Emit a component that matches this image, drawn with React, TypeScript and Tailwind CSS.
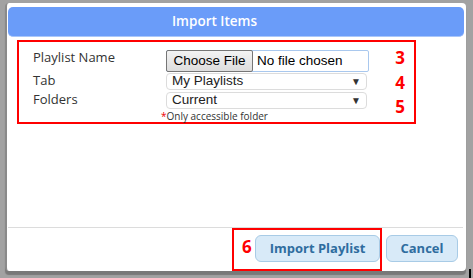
export default function App() {
  return (
    <div className="relative w-[473px] h-[278px] overflow-hidden bg-[#a2a2a2] pt-[3px] pl-[5px]">
      {/* Dialog */}
      <div className="flex flex-col w-[461px] h-[268px] bg-white rounded-[4px] border-l-2 border-[#8a8a8a] shadow-[0_4px_1px_rgba(0,0,0,0.25)]">
        {/* Title bar */}
        <div className="mt-[4px] ml-[1px] w-[456px] h-[30px] shrink-0 flex items-center justify-center pr-[43px] rounded-[5px] bg-[#6a9cf9] border-b border-[#a9c6fa] text-white text-[13.5px] font-semibold [font-family:'Open_Sans',sans-serif]">
          Import Items
        </div>

        {/* Form (annotated) */}
        <div className="mt-[3px] ml-[10px] w-[399px] h-[84px] shrink-0 flex border-2 border-[#ff0000]">
          <div className="flex flex-col pl-[14px] pt-[8px] text-[#333] [font-family:'Open_Sans',sans-serif]">
            <FormRow label="Playlist Name" height="h-[22px]">
              <div className="flex items-center w-[203px] h-[22px] border border-[#a9c8ee] rounded-[2px] [font-family:'Liberation_Sans',Arial,sans-serif] text-[13.5px] text-black">
                <span className="flex items-center justify-center w-[87px] h-[22px] -ml-px border border-[#767676] rounded-[2px] bg-gradient-to-b from-[#f3f3f3] to-[#dddddd]">
                  Choose File
                </span>
                <span className="ml-[4px]">No file chosen</span>
              </div>
            </FormRow>
            <FormRow label="Tab" height="h-[17px]" className="mt-[1px]">
              <Select value="My Playlists" />
            </FormRow>
            <FormRow label="Folders" height="h-[17px]" className="mt-[2px]">
              <Select value="Current" />
            </FormRow>
            <div className="mt-[1px] pl-[128px] text-[10px] leading-[12px] text-[#333]">
              <span className="text-[#e00]">*</span>Only accessible folder
            </div>
          </div>
          <div className="ml-auto pr-[9px] pt-[4px] flex flex-col text-[17px] leading-[24.5px] font-bold text-[#ff0000] [font-family:'Open_Sans',sans-serif]">
            <span>3</span>
            <span>4</span>
            <span>5</span>
          </div>
        </div>

        <div className="flex-1" />

        {/* Footer */}
        <div className="ml-[1px] mr-[3px] h-[44px] shrink-0 flex justify-end items-start border-t border-[#dcdcdc] pr-[5px] [font-family:'Open_Sans',sans-serif]">
          <div className="flex items-start w-[150px] h-[43px] border-2 border-[#ff0000] pl-[8px] pt-[5px]">
            <span className="text-[17px] leading-[24px] font-bold text-[#ff0000]">6</span>
            <FooterButton label="Import Playlist" width="w-[125px]" className="ml-auto" />
          </div>
          <FooterButton label="Cancel" width="w-[72px]" className="ml-[4px] mt-[7px]" />
        </div>
      </div>

      {/* stray cursor mark at bottom right */}
      <div className="absolute left-[469px] top-[269px] w-[2px] h-[9px] bg-black" />
    </div>
  );
}

function FormRow({ label, height, className = "", children }: { label: string; height: string; className?: string; children: React.ReactNode }) {
  return (
    <div className={`flex items-start ${height} ${className}`}>
      <span className="w-[133px] text-[13px] leading-[14px]">{label}</span>
      {children}
    </div>
  );
}

function Select({ value }: { value: string }) {
  return (
    <div className="flex items-center w-[201px] h-[17px] pl-[5px] pr-[5px] border border-[#dcdcdc] rounded-[4px] text-[13.5px] text-[#222] [font-family:'Liberation_Sans',Arial,sans-serif]">
      <span className="flex-1">{value}</span>
      <span className="text-[10px] text-[#333]">▼</span>
    </div>
  );
}

function FooterButton({ label, width, className = "" }: { label: string; width: string; className?: string }) {
  return (
    <button className={`flex items-center justify-center ${width} h-[27px] rounded-[6px] border border-[#a8cbe6] bg-[#d8eaf8] text-[13px] font-bold text-[#2f6d9f] ${className}`}>
      {label}
    </button>
  );
}
